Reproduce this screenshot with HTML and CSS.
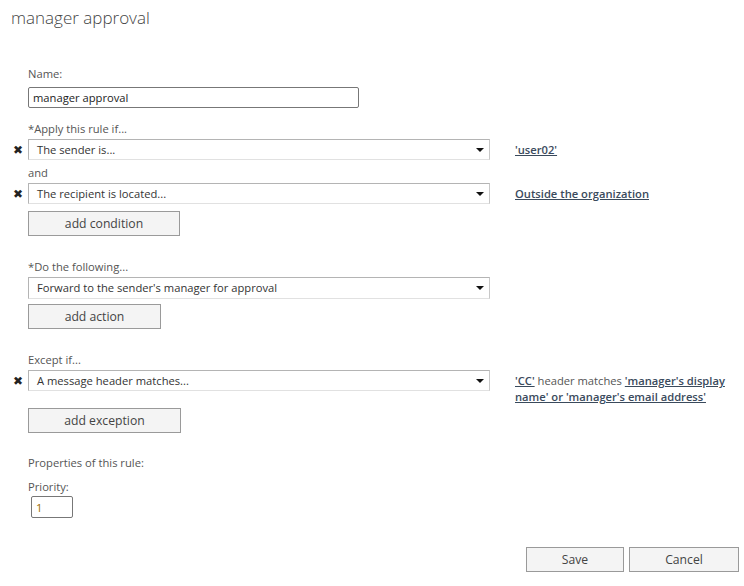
FILE: index.html
```html
<!DOCTYPE html>
<html lang="en">
<head>
    <meta charset="UTF-8">
    <title>manager approval</title>
    <link rel="stylesheet" href="styles.css">
</head>
<body>
    <h1 class="titulo">manager approval</h1>

    <div class="form">
        <div class="label first">Name:</div>
        <input class="nome" type="text" value="manager approval">

        <div class="label gap-sm">*Apply this rule if...</div>
        <div class="linha">
            <span class="remover">&#x2716;</span>
            <div class="drop">The sender is...<span class="seta"></span></div>
            <div class="nota"><a href="#">'user02'</a></div>
        </div>
        <div class="label tight">and</div>
        <div class="linha">
            <span class="remover">&#x2716;</span>
            <div class="drop">The recipient is located...<span class="seta"></span></div>
            <div class="nota"><a href="#">Outside the organization</a></div>
        </div>
        <button class="botao b-cond">add condition</button>

        <div class="label gap-lg">*Do the following...</div>
        <div class="linha alta">
            <span class="remover"></span>
            <div class="drop">Forward to the sender's manager for approval<span class="seta"></span></div>
        </div>
        <button class="botao b-acao">add action</button>

        <div class="label gap-lg">Except if...</div>
        <div class="linha">
            <span class="remover">&#x2716;</span>
            <div class="drop">A message header matches...<span class="seta"></span></div>
            <div class="nota"><a href="#">'CC'</a> header matches <a href="#">'manager's display name' or 'manager's email address'</a></div>
        </div>
        <button class="botao b-exc">add exception</button>

        <div class="label gap-md">Properties of this rule:</div>
        <div class="label gap-xs">Priority:</div>
        <input class="prioridade" type="text" value="1">
    </div>

    <div class="rodape">
        <button class="botao b-save">Save</button>
        <button class="botao b-cancel">Cancel</button>
    </div>
</body>
</html>
```

FILE: styles.css
```css
body { margin: 0; background: #fff; font-family: "Open Sans", "Noto Sans", sans-serif; font-size: 11.2px; color: #333; }
.titulo { margin: 0; padding: 6px 0 0 11px; font-size: 17px; font-weight: 300; line-height: 24px; color: #444; }

.label { margin-left: 28px; line-height: 16px; color: #555; }
.label.first { margin-top: 36px; }
.label.gap-sm { margin-top: 13px; }
.label.tight { margin-top: 5px; }
.label.gap-lg { margin-top: 23px; }
.label.gap-md { margin-top: 22px; }
.label.gap-xs { margin-top: 8px; }

.nome { display: block; box-sizing: border-box; margin: 5px 0 0 28px; width: 331px; height: 21px; padding: 0 4px; border: 1px solid #777; border-radius: 2px; font: inherit; color: #222; }
.prioridade { display: block; box-sizing: border-box; margin: 1px 0 0 31px; width: 42px; height: 22px; padding: 0 4px; border: 1px solid #777; border-radius: 2px; font: inherit; color: #9a6a00; }

.linha { display: flex; align-items: flex-start; height: 21px; margin-top: 2px; }
.linha.alta { height: 22px; }
.remover { width: 28px; height: 21px; line-height: 21px; padding-left: 13px; box-sizing: border-box; font-size: 12px; color: #222; flex: none; }
.drop { position: relative; box-sizing: border-box; width: 462px; height: 100%; line-height: 19px; padding-left: 8px; border: 1px solid #b4b4b4; border-bottom-color: #e1e1e1; border-right-color: #c8c8c8; color: #333; flex: none; }
.seta { position: absolute; right: 5px; top: 8px; width: 0; height: 0; border-left: 4px solid transparent; border-right: 4px solid transparent; border-top: 4px solid #111; }
.nota { margin-left: 25px; width: 222px; line-height: 16px; padding-top: 3px; color: #555; }
.nota a { color: #3a4a5c; font-weight: 600; text-decoration: underline; }

.botao { display: block; box-sizing: border-box; height: 25px; padding: 0; border: 1px solid #9a9a9a; background: #f4f4f4; font: inherit; font-size: 12.2px; color: #444; }
.b-cond { margin: 7px 0 0 28px; width: 152px; }
.b-acao { margin: 5px 0 0 28px; width: 133px; }
.b-exc { margin: 17px 0 0 28px; width: 153px; }

.rodape { display: flex; justify-content: flex-end; gap: 5px; margin-top: 29px; padding-right: 5px; }
.b-save { width: 98px; }
.b-cancel { width: 110px; }
```
